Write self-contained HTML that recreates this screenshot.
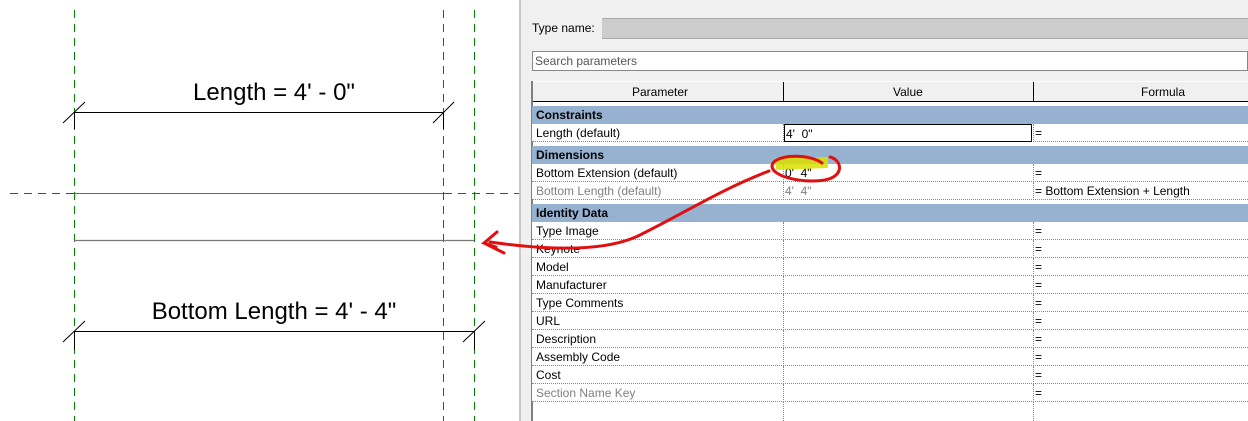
<!DOCTYPE html>
<html><head><style>
body{margin:0;width:1248px;height:421px;overflow:hidden;background:#fff;font-family:"Liberation Sans",sans-serif;position:relative}
.a{position:absolute}
.panel{left:519px;top:0;width:729px;height:421px;background:#f0f0f0;border-left:2px solid #c8c8c8;box-sizing:border-box}
.t{font-size:12px;color:#000;white-space:nowrap}
.row{position:absolute;left:532px;width:716px;height:18px;border-bottom:1px dotted #888;box-sizing:border-box;background:#fff}
.band{position:absolute;left:532px;width:716px;height:18px;background:#97b2d0;font-weight:bold;font-size:12px;line-height:18px;padding-left:4px;box-sizing:border-box}
.row span{position:absolute;top:2px;font-size:12px}
.p{left:4px}.v{left:253px}.f{left:503px}
.row:before{content:"";position:absolute;left:251px;top:0;height:18px;border-left:1px dotted #888}
.row:after{content:"";position:absolute;left:501px;top:0;height:18px;border-left:1px dotted #888}
.g{color:#808080}
</style></head><body>
<svg class="a" style="left:0;top:0" width="520" height="421">
<g stroke="#008000" stroke-width="1" stroke-dasharray="8,6">
<line x1="74.5" y1="10" x2="74.5" y2="421"/>
<line x1="443.5" y1="10" x2="443.5" y2="421"/>
<line x1="474.5" y1="10" x2="474.5" y2="421"/>
<line x1="10" y1="193.5" x2="520" y2="193.5"/>
</g>
<line x1="74" y1="193.5" x2="443" y2="193.5" stroke="#666" stroke-width="1"/>
<line x1="74" y1="240.5" x2="474" y2="240.5" stroke="#777" stroke-width="1.2"/>
<g stroke="#000" stroke-width="1">
<line x1="74" y1="112.5" x2="443" y2="112.5"/>
<line x1="63" y1="123" x2="85" y2="102"/><line x1="433" y1="123" x2="454" y2="102"/>
<line x1="74.5" y1="112" x2="74.5" y2="129"/><line x1="443.5" y1="112" x2="443.5" y2="129"/>
<line x1="74" y1="331.5" x2="474" y2="331.5"/>
<line x1="63" y1="342" x2="85" y2="321"/><line x1="463" y1="342" x2="485" y2="321"/>
<line x1="74.5" y1="331" x2="74.5" y2="350"/><line x1="474.5" y1="331" x2="474.5" y2="350"/>
</g>
<text x="274" y="100" font-family="Liberation Sans" font-size="24" text-anchor="middle">Length = 4' - 0"</text>
<text x="274" y="319" font-family="Liberation Sans" font-size="24" text-anchor="middle">Bottom Length = 4' - 4"</text>
</svg>
<div class="a panel"></div>
<div class="a t" style="left:532px;top:21px">Type name:</div>
<div class="a" style="left:602px;top:18px;width:646px;height:21px;background:#cccccc;border-top:1px solid #aaa;border-bottom:1px solid #aaa;box-sizing:border-box"></div>
<div class="a" style="left:532px;top:51px;width:716px;height:20px;background:#fff;border:1px solid #888;box-sizing:border-box"><span class="a t" style="left:2px;top:2px;color:#555">Search parameters</span></div>
<div class="a" style="left:531px;top:81px;width:717px;height:340px;background:#fff;border-left:2px solid #808080;box-sizing:border-box"></div>
<div class="a" style="left:533px;top:82px;width:715px;height:20px;background:#f0f0f0;border-bottom:1px solid #000;box-sizing:border-box"></div>
<div class="a" style="left:783px;top:82px;height:20px;border-left:1px solid #000"></div>
<div class="a" style="left:1033px;top:82px;height:20px;border-left:1px solid #000"></div>
<div class="a t" style="left:632px;top:85px">Parameter</div>
<div class="a t" style="left:893px;top:85px">Value</div>
<div class="a t" style="left:1141px;top:85px">Formula</div>
<div class="band" style="top:106px">Constraints</div>
<div class="row" style="top:124px"><span class="p">Length (default)</span><span class="f">=</span></div>
<div class="a" style="left:784px;top:124px;width:248px;height:18px;border:1px solid #000;box-sizing:border-box;background:#fff"><span class="a t" style="left:1px;top:2px">4'&nbsp; 0"</span></div>
<div class="band" style="top:146px">Dimensions</div>
<div class="row" style="top:164px"><span class="p">Bottom Extension (default)</span><span class="v">0'&nbsp; 4"</span><span class="f">=</span></div>
<div class="row" style="top:182px"><span class="p g">Bottom Length (default)</span><span class="v g">4'&nbsp; 4"</span><span class="f">= Bottom Extension + Length</span></div>
<div class="band" style="top:204px">Identity Data</div>
<div class="row" style="top:222px"><span class="p">Type Image</span><span class="f">=</span></div>
<div class="row" style="top:240px"><span class="p">Keynote</span><span class="f">=</span></div>
<div class="row" style="top:258px"><span class="p">Model</span><span class="f">=</span></div>
<div class="row" style="top:276px"><span class="p">Manufacturer</span><span class="f">=</span></div>
<div class="row" style="top:294px"><span class="p">Type Comments</span><span class="f">=</span></div>
<div class="row" style="top:312px"><span class="p">URL</span><span class="f">=</span></div>
<div class="row" style="top:330px"><span class="p">Description</span><span class="f">=</span></div>
<div class="row" style="top:348px"><span class="p">Assembly Code</span><span class="f">=</span></div>
<div class="row" style="top:366px"><span class="p">Cost</span><span class="f">=</span></div>
<div class="row" style="top:384px"><span class="p g">Section Name Key</span><span class="f">=</span></div>
<div class="a" style="left:783px;top:402px;height:19px;border-left:1px dotted #888"></div>
<div class="a" style="left:1033px;top:402px;height:19px;border-left:1px dotted #888"></div>
<svg class="a" style="left:0;top:0" width="1248" height="421">
<path d="M775 158 L828 157 L828 168 L776 170 Z" fill="#d8e000" opacity="0.85"/>
<path d="M822 163 C 810 154, 780 154, 773 163 C 766 175, 800 184, 825 180 C 845 176, 842 160, 830 157" fill="none" stroke="#e01010" stroke-width="3" stroke-linecap="round"/>
<path d="M769 171 C 720 190, 690 210, 640 235 C 610 250, 560 252, 490 242" fill="none" stroke="#e01010" stroke-width="3" stroke-linecap="round"/>
<path d="M497 232 L484 243 L496 247 M484 243 L504 253" fill="none" stroke="#e01010" stroke-width="3" stroke-linecap="round"/>
</svg>
</body></html>
